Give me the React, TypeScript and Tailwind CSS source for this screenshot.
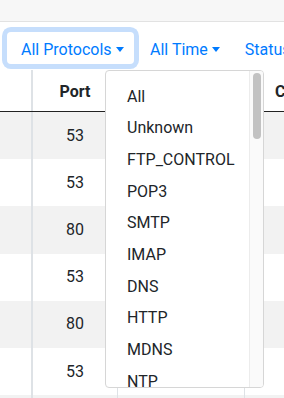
import React from "react";

const ports = [53, 53, 80, 53, 80, 53, 80];
const protocols = ["All", "Unknown", "FTP_CONTROL", "POP3", "SMTP", "IMAP", "DNS", "HTTP", "MDNS", "NTP", "SSDP"];

function Caret() {
  return (
    <span className="ml-[4px] inline-block h-0 w-0 border-l-[4px] border-r-[4px] border-t-[5px] border-l-transparent border-r-transparent border-t-[#007bff]" />
  );
}

export default function App() {
  return (
    <div
      className="relative h-[398px] w-[284px] overflow-hidden bg-white text-[16px] text-[#212529]"
      style={{ fontFamily: "Roboto, 'Liberation Sans', sans-serif" }}
    >
      <div className="h-[22px] border-b border-[#e2e2e2] bg-[#f7f7f7]" />
      <div className="flex h-[48px] items-start pl-[7px] pt-[10px] whitespace-nowrap">
        <button className="flex h-[32px] w-[127px] shrink-0 items-center rounded-[4px] pl-[14px] pt-[3px] text-[#007bff] shadow-[0_0_0_5px_#c6defc]">
          All Protocols
          <Caret />
        </button>
        <button className="ml-[4px] flex h-[32px] shrink-0 items-center px-3 pt-[3px] text-[#007bff]">
          All Time
          <Caret />
        </button>
        <button className="ml-[1px] flex h-[32px] shrink-0 items-center px-3 pt-[3px] text-[#007bff]">
          Status
          <Caret />
        </button>
      </div>
      <div className="w-[400px]">
        <div className="flex h-[42px] border-b border-[#222]">
          <div className="w-[33px] shrink-0 border-r-2 border-[#dee2e6]" />
          <div className="flex w-[85px] shrink-0 items-center justify-center border-r border-[#dee2e6] pt-[2px] font-bold">Port</div>
          <div className="w-[127px] shrink-0 border-r border-[#dee2e6]" />
          <div className="flex items-center pl-[30px] pt-[2px] font-bold whitespace-nowrap">Client</div>
        </div>
        {ports.map((p, i) => (
          <div key={i} className={`flex h-[47.2px] ${i % 2 === 0 ? "bg-[#f2f2f2]" : "bg-white"}`}>
            <div className="w-[33px] shrink-0 border-r-2 border-[#dee2e6]" />
            <div className="flex w-[85px] shrink-0 items-center justify-center border-r border-[#dee2e6]">{p}</div>
            <div className="w-[127px] shrink-0 border-r border-[#dee2e6]" />
            <div className="flex-1" />
          </div>
        ))}
      </div>
      <div className="absolute left-[105px] top-[70px] h-[318px] w-[159px] overflow-hidden rounded-[4px] border border-[#d6d6d6] bg-white">
        <div className="pt-[10px]">
          {protocols.map((p) => (
            <div key={p} className="flex h-[31.67px] items-center pl-[21px] whitespace-nowrap">
              {p}
            </div>
          ))}
        </div>
        <div className="absolute bottom-0 right-0 top-0 w-[14px] border-l border-[#ececec] bg-[#fafafa]">
          <div className="ml-[3px] mt-[2px] h-[66px] w-[8px] rounded-full bg-[#c2c2c2]" />
        </div>
      </div>
    </div>
  );
}
